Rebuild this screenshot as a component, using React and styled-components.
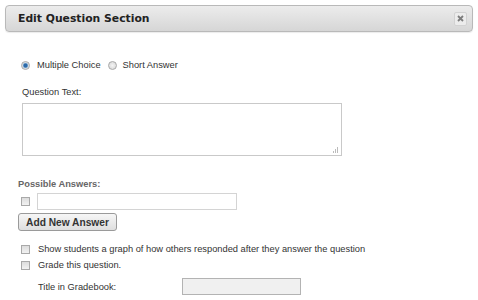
import styled, { createGlobalStyle } from "styled-components";

const Global = createGlobalStyle`
  body {
    margin: 0;
    background: #fff;
    font-family: "Liberation Sans", Arial, sans-serif;
    font-size: 9.3px;
    color: #333;
  }
`;

const Page = styled.div`
  padding: 5px 5px 0 5px;
  width: 478px;
  height: 300px;
  box-sizing: border-box;
  overflow: hidden;
`;

const TitleBar = styled.div`
  height: 27px;
  box-sizing: border-box;
  display: flex;
  align-items: center;
  justify-content: space-between;
  padding: 0 5px 0 12px;
  border: 1px solid #b9b9b9;
  border-radius: 4px;
  background: linear-gradient(#ececec, #d6d6d6);
  box-shadow: 0 1px 1px rgba(0, 0, 0, 0.08);
`;

const Title = styled.span`
  font-family: "DejaVu Sans", Verdana, sans-serif;
  font-weight: bold;
  font-size: 10.8px;
  color: #222;
`;

const CloseBtn = styled.span`
  width: 13px;
  height: 14px;
  box-sizing: border-box;
  display: flex;
  align-items: center;
  justify-content: center;
  border: 1px solid #d2d2d2;
  border-radius: 2px;
  background: #ececec;
`;

const Body = styled.div`
  display: flex;
  flex-direction: column;
  align-items: flex-start;
  padding-left: 13px;
`;

const Row = styled.div`
  display: flex;
  align-items: center;
  height: ${(p) => p.h || 12}px;
  margin-top: ${(p) => p.mt || 0}px;
  padding-left: ${(p) => p.pl || 0}px;
`;

const Radio = styled.span`
  width: 9px;
  height: 9px;
  border-radius: 50%;
  box-sizing: border-box;
  border: 1px solid #a8a8a8;
  background: ${(p) =>
    p.checked
      ? "radial-gradient(circle, #2d6aa8 0 1.6px, #8fb4d8 2.4px, #e4e4e4 3.2px)"
      : "radial-gradient(circle, #f4f4f4, #d4d4d4)"};
  margin-right: ${(p) => p.gap || 8}px;
`;

const Box = styled.span`
  width: 9px;
  height: 9px;
  box-sizing: border-box;
  border: 1px solid #a9a9a9;
  background: linear-gradient(#dcdcdc, #f2f2f2);
  margin-right: ${(p) => p.gap || 8}px;
  flex-shrink: 0;
`;

const Label = styled.span`
  margin-right: ${(p) => p.mr || 0}px;
  width: ${(p) => (p.w ? `${p.w}px` : "auto")};
  white-space: nowrap;
`;

const Heading = styled.span`
  font-weight: bold;
  color: #666;
`;

const TextArea = styled.div`
  position: relative;
  margin-top: 5px;
  margin-left: 4px;
  width: 320px;
  height: 53px;
  box-sizing: border-box;
  border: 1px solid #c9c9c9;
  background: #fff;
`;

const Grip = styled.svg`
  position: absolute;
  right: 2px;
  bottom: 2px;
`;

const Input = styled.div`
  width: ${(p) => p.w}px;
  height: 17px;
  box-sizing: border-box;
  border: 1px solid ${(p) => (p.disabled ? "#b3b3b3" : "#d4d4d4")};
  background: ${(p) => (p.disabled ? "#f0f0f0" : "#fff")};
`;

const Button = styled.div`
  margin-top: 3px;
  width: 99px;
  height: 18px;
  box-sizing: border-box;
  display: flex;
  align-items: center;
  justify-content: center;
  border: 1px solid #9a9a9a;
  border-radius: 3px;
  background: linear-gradient(#f6f6f6, #dedede);
  font-weight: bold;
  font-size: 10.2px;
  color: #333;
`;

export default function App() {
  return (
    <Page>
      <Global />
      <TitleBar>
        <Title>Edit Question Section</Title>
        <CloseBtn>
          <svg width="7" height="7" viewBox="0 0 7 7">
            <path d="M1 1L6 6M6 1L1 6" stroke="#7d7d7d" strokeWidth="1.8" />
          </svg>
        </CloseBtn>
      </TitleBar>
      <Body>
        <Row mt={27} pl={3}>
          <Radio checked gap={7} />
          <Label mr={7}>Multiple Choice</Label>
          <Radio gap={6} />
          <Label>Short Answer</Label>
        </Row>
        <Row mt={15} pl={4}>
          <Label>Question Text:</Label>
        </Row>
        <TextArea>
          <Grip width="7" height="7" viewBox="0 0 7 7">
            <rect x="5" y="1" width="1" height="6" fill="#bbb" />
            <rect x="3" y="3" width="1" height="4" fill="#bbb" />
            <rect x="1" y="5" width="1" height="2" fill="#bbb" />
          </Grip>
        </TextArea>
        <Row mt={22}>
          <Heading>Possible Answers:</Heading>
        </Row>
        <Row h={17} mt={3} pl={3}>
          <Box gap={7} />
          <Input w={200} />
        </Row>
        <Button>Add New Answer</Button>
        <Row mt={12} pl={3}>
          <Box />
          <Label>Show students a graph of how others responded after they answer the question</Label>
        </Row>
        <Row mt={4} pl={3}>
          <Box />
          <Label>Grade this question.</Label>
        </Row>
        <Row h={17} mt={7} pl={20}>
          <Label w={144}>Title in Gradebook:</Label>
          <Input w={119} disabled />
        </Row>
      </Body>
    </Page>
  );
}
